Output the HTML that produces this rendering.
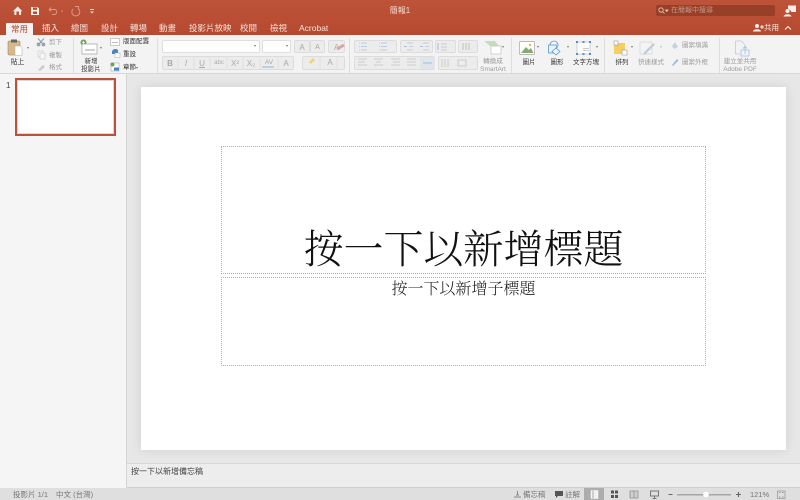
<!DOCTYPE html>
<html><head><meta charset="utf-8">
<style>
*{box-sizing:border-box}
html,body{margin:0;padding:0;width:800px;height:500px;overflow:hidden;background:#e9e9e9}
body{font-family:"Liberation Sans","Noto Sans CJK TC",sans-serif;position:relative}
.a{position:absolute;white-space:nowrap}
.tab{position:absolute;top:22px;height:12px;line-height:12px;font-size:8.5px;color:#f6e2dc}
.l{position:absolute;white-space:nowrap;font-size:6.5px;line-height:9px;color:#333;text-align:center}
.g{color:#9b9b9b}
.b{position:absolute;background:#ececec;border:1px solid #dcdcdc;border-radius:2px}
.sep{position:absolute;top:38px;width:1px;height:35px;background:#dedede}
svg{position:absolute;overflow:visible}
.c{position:absolute;font-size:8px;line-height:13px;color:#a8a8a8;text-align:center}
.ar{position:absolute;width:0;height:0;border-left:1.5px solid transparent;border-right:1.5px solid transparent;border-top:2px solid #777}
</style></head><body>
<!-- title bar -->
<div class="a" style="left:0;top:0;width:800px;height:35px;background:linear-gradient(#bd5339,#b64a30)"></div>
<svg style="left:0;top:0" width="800" height="35">
<path d="M13 11.2L17.7 6.5 22.4 11.2H21V15H19V11.5H16.4V15H14.4V11.2Z" fill="#fbeee9"/>
<path d="M31 7H37.5L39 8.5V15H31Z" fill="#fbeee9"/><rect x="33" y="7.5" width="4" height="2.4" fill="#b94f35"/><rect x="33" y="11.5" width="4" height="2.5" fill="#b94f35"/>
<path d="M49 9.5H54.5C57.5 9.500 57.500 14.500 54 14.500H52M49 9.500L51 7.500M49 9.500L51 11.500" fill="none" stroke="#d99887" stroke-width="1"/>
<circle cx="62" cy="11" r=".8" fill="#d99887"/>
<path d="M78 8.500A4 4 0 1 1 73 9M75 6.500H78.500V10" fill="none" stroke="#d99887" stroke-width="1"/>
<rect x="90" y="9" width="4" height="1" fill="#f4dcd5"/><path d="M90 11.500H94L92 13.500Z" fill="#f4dcd5"/>
<path d="M788 5.500H796V12H791.500L790.500 10.500 788 8.500Z" fill="#fbeee9"/><circle cx="787.500" cy="11" r="2" fill="#fbeee9"/><path d="M783.500 16.500C784 13.500 791 13.500 791.500 16.500Z" fill="#fbeee9"/>
</svg>
<div class="a" style="left:385px;top:5px;width:30px;text-align:center;font-size:8px;line-height:12px;color:#f5ded7">簡報1</div>
<div class="a" style="left:656px;top:5px;width:119px;height:11px;background:#974029;border-radius:2px"></div>
<svg style="left:0;top:0" width="800" height="20"><circle cx="661" cy="10" r="2.200" fill="none" stroke="#eec9bd" stroke-width=".8"/><path d="M662.500 11.500L664.500 13.500M665.500 10H668L666.700 11.500Z" stroke="#eec9bd" stroke-width=".8" fill="#eec9bd"/></svg>
<div class="a" style="left:671px;top:5px;font-size:7px;line-height:12px;color:#c99484">在簡報中搜尋</div>
<!-- tabs -->
<div class="a" style="left:6px;top:23px;width:27px;height:12px;background:#f3f3f3;border-radius:1px 1px 0 0;color:#b5482e;font-size:8.500px;line-height:12px;text-align:center">常用</div>
<div class="tab" style="left:42px">插入</div>
<div class="tab" style="left:71px">繪圖</div>
<div class="tab" style="left:101px">設計</div>
<div class="tab" style="left:130px">轉場</div>
<div class="tab" style="left:159px">動畫</div>
<div class="tab" style="left:189px">投影片放映</div>
<div class="tab" style="left:240px">校閱</div>
<div class="tab" style="left:270px">檢視</div>
<div class="tab" style="left:299px">Acrobat</div>
<svg style="left:0;top:0" width="800" height="35"><circle cx="757" cy="26" r="2" fill="#fbeee9"/><path d="M753 31.500C753 28.500 761 28.500 761 31.500Z" fill="#fbeee9"/><path d="M760 27H764M762 25V29" stroke="#fbeee9"/><path d="M785 29.500L788 26.500 791 29.500" fill="none" stroke="#fbeee9"/></svg>
<div class="tab" style="left:764px;color:#fbeee9;font-size:7.500px">共用</div>
<!-- ribbon -->
<div class="a" style="left:0;top:35px;width:800px;height:39px;background:#f3f3f3;border-bottom:1px solid #d8d8d8"></div>
<div class="sep" style="left:73px"></div><div class="sep" style="left:157px"></div><div class="sep" style="left:349px"></div><div class="sep" style="left:511px"></div><div class="sep" style="left:604px"></div><div class="sep" style="left:719px"></div>
<!-- paste -->
<svg style="left:0;top:0" width="160" height="75">
<rect x="8" y="41" width="12" height="14" rx="1" fill="#d9b98b" stroke="#8a7a62" stroke-width=".5"/><rect x="11" y="39.500" width="6" height="3" fill="#666"/><path d="M15 46H20.500L22 47.500V55.500H15Z" fill="#fff" stroke="#aaa" stroke-width=".5"/>
<path d="M38 38.500L44 45M44 38.500L38 45" stroke="#8f9aa3" stroke-width="1"/><circle cx="38.500" cy="44.500" r="1.400" fill="none" stroke="#8f9aa3"/><circle cx="43.500" cy="44.500" r="1.400" fill="none" stroke="#8f9aa3"/>
<rect x="38" y="51" width="5" height="6" fill="#f7f7f7" stroke="#c6c6c6" stroke-width=".6"/><rect x="40" y="53" width="5" height="6" fill="#f7f7f7" stroke="#c6c6c6" stroke-width=".6"/>
<path d="M38 70L43 65 45 67 40 71Z" fill="#c6cbd0"/>
<circle cx="83.500" cy="42.500" r="3" fill="#63a850"/><path d="M82 42.500H85M83.500 41V44" stroke="#fff" stroke-width=".8"/>
<rect x="82" y="44" width="15" height="10" fill="#fff" stroke="#a2a2a2" stroke-width=".7"/><rect x="85" y="49" width="10" height="2" fill="#d0d0d0"/>
<rect x="110.500" y="38.500" width="9" height="7" fill="#fff" stroke="#aaa" stroke-width=".6"/><rect x="112" y="42" width="6" height="1" fill="#bbb"/>
<path d="M112 52C112 49 116 48 118 50V54H112Z" fill="#4a83c4"/><rect x="115" y="53" width="5" height="4.500" fill="#fff" stroke="#aaa" stroke-width=".5"/>
<rect x="111" y="63" width="8" height="8" fill="#fff" stroke="#aaa" stroke-width=".6"/><circle cx="112.500" cy="64.500" r="2" fill="#63a850"/><rect x="114" y="67.500" width="5" height="3" fill="#4a83c4"/>
</svg>
<div class="ar" style="left:27px;top:47px"></div><div class="ar" style="left:100px;top:47px"></div>
<div class="l" style="left:6px;top:58px;width:23px;font-size:6.800px">貼上</div>
<div class="l g" style="left:49px;top:38px">剪下</div>
<div class="l g" style="left:49px;top:51px">複製</div>
<div class="l g" style="left:49px;top:63px">格式</div>
<div class="l" style="left:78px;top:58px;width:26px;line-height:8px;">新增<br>投影片</div>
<div class="l" style="left:123px;top:37px;">版面配置</div><div class="ar" style="left:147px;top:41px"></div>
<div class="l" style="left:123px;top:50px;">重設</div>
<div class="l" style="left:123px;top:63px;">章節</div><div class="ar" style="left:136px;top:67px"></div>
<!-- font -->
<div class="a" style="left:162px;top:40px;width:98px;height:13px;background:#fff;border:1px solid #dedede;border-radius:2px"></div><div class="ar" style="left:254px;top:45px"></div>
<div class="a" style="left:262px;top:40px;width:29px;height:13px;background:#fff;border:1px solid #dedede;border-radius:2px"></div><div class="ar" style="left:286px;top:45px"></div>
<div class="b c" style="left:294px;top:40px;width:16px;height:13px;">A</div><div class="b c" style="left:310px;top:40px;width:15px;height:13px;font-size:7px">A</div><div class="b c" style="left:328px;top:40px;width:17px;height:13px;color:#c9a0a0">A</div>
<div class="b" style="left:162px;top:56px;width:132px;height:14px"></div>
<div class="c" style="left:164px;top:57px;width:12px;font-weight:bold">B</div>
<div class="c" style="left:180px;top:57px;width:12px;font-style:italic">I</div>
<div class="c" style="left:196px;top:57px;width:12px;text-decoration:underline">U</div>
<div class="c" style="left:212px;top:57px;width:14px;font-size:6px">abc</div>
<div class="c" style="left:228px;top:57px;width:14px;">X²</div>
<div class="c" style="left:244px;top:57px;width:14px;">X₂</div>
<div class="c" style="left:262px;top:56px;width:14px;font-size:6.500px">AV</div>
<div class="c" style="left:280px;top:57px;width:12px;">A</div>
<div class="b" style="left:302px;top:56px;width:43px;height:14px"></div>
<div class="c" style="left:323px;top:56px;width:14px;">A</div>
<svg style="left:0;top:0" width="520" height="75">
<path d="M309 62L313 58 315 60 311 64Z" fill="#efd27a"/><path d="M320 56V70M337 56V70M178 56V70M194 56V70M210 56V70M227 56V70M243 56V70M260 56V70M278 56V70" stroke="#e0e0e0"/>
<path d="M262 67H274" stroke="#8db5de"/>
<path d="M337 49L344 45" stroke="#d9a6a6" stroke-width="3"/>
</svg>
<!-- paragraph -->
<div class="b" style="left:354px;top:40px;width:43px;height:13px"></div>
<div class="b" style="left:400px;top:40px;width:33px;height:13px"></div>
<div class="b" style="left:435px;top:40px;width:21px;height:13px"></div>
<div class="b" style="left:458px;top:40px;width:20px;height:13px"></div>
<div class="b" style="left:354px;top:56px;width:81px;height:14px"></div>
<div class="b" style="left:438px;top:56px;width:40px;height:14px"></div>
<svg style="left:0;top:0" width="520" height="75" fill="none" stroke="#c2c2c2" stroke-width=".8">
<path d="M361 43H367M361 46.500H367M361 50H367M381 43H387M381 46.500H387M381 50H387M360 43H359M360 46.500H359M360 50H359M380 43H379M380 46.500H379M380 50H379" stroke="#a9c4df"/>
<path d="M407 43H413M409 46.500H413M407 50H413M423 43H429M425 46.500H429M423 50H429M441 44H447M441 47H447M441 50H447"/>
<path d="M404 46.500H407M420 46.500H423M438 43V50" stroke="#8db5de"/>
<path d="M463 43V50M466 43V50M469 43V50" stroke="#c7d4b9" stroke-width="1.500"/>
<path d="M358 59H367M358 62H365M358 65H367M374 59H383M376 62H381M374 65H383M391 59H400M393 62H400M391 65H400M407 59H416M407 62H416M407 65H416"/>
<rect x="420" y="57" width="15" height="12" fill="#dfe5ea" stroke="none"/><path d="M423 63H432" stroke="#8db5de"/>
<path d="M442 59V67M445 59V67M448 59V67M458 60H466V66H458Z"/>
<path d="M484 41H495L499 46H490Z" fill="#c9dcb8" stroke="none"/><rect x="491" y="46" width="10" height="8" fill="#fff" stroke="#c6c6c6"/>
</svg>
<div class="ar" style="left:502px;top:46px"></div>
<div class="l g" style="left:480px;top:58px;width:26px;line-height:8px">轉換成<br>SmartArt</div>
<!-- insert -->
<svg style="left:0;top:0" width="800" height="75">
<rect x="519.500" y="41.500" width="15" height="13" rx="1" fill="#fff" stroke="#a5a5a5" stroke-width=".7"/><path d="M521 53L526 47 529 50 531 48 533.500 53Z" fill="#85aa72"/><circle cx="530" cy="45" r="1.200" fill="#e5b842"/>
<circle cx="554" cy="45" r="4" fill="#f0f6fc" stroke="#5b97d1" stroke-width=".8"/><rect x="548.500" y="45" width="8" height="8" fill="#eaf2fa" stroke="#5b97d1" stroke-width=".8"/><path d="M556 48L560 51.500 556 55 552 51.500Z" fill="#eaf2fa" stroke="#5b97d1" stroke-width=".8"/>
<rect x="577" y="42" width="13" height="12" fill="#fff" stroke="#aaa" stroke-width=".5"/><path d="M583 48.500H589M583 50.500H589" stroke="#bbb" stroke-width=".7"/>
<g fill="#4a90d9"><rect x="576" y="41" width="2" height="2"/><rect x="582.500" y="41" width="2" height="2"/><rect x="589" y="41" width="2" height="2"/><rect x="576" y="53" width="2" height="2"/><rect x="582.500" y="53" width="2" height="2"/><rect x="589" y="53" width="2" height="2"/></g>
<rect x="614" y="43" width="11" height="11" fill="#f6cf5e"/><rect x="614" y="41" width="4" height="4" fill="#fff" stroke="#888" stroke-width=".5"/><rect x="622" y="50" width="5" height="5" fill="#fff" stroke="#888" stroke-width=".5"/>
<rect x="640" y="42" width="12" height="12" rx="1" fill="#f4f4f4" stroke="#d4d4d4" stroke-width=".7"/><path d="M644 54L651 47 654 44" stroke="#c5ced6" stroke-width="2.500"/>
<path d="M672 46L675 42 678 47 674 49Z" fill="#c8d2da"/>
<path d="M672 65L677 59 678.500 60.500 673 66Z" fill="#9bb9d8"/>
<path d="M735.500 41H741.500L745 45V50M735.500 41V54H740" fill="none" stroke="#b9cde0" stroke-width=".8"/><path d="M741 50H749V56H741ZM745 54V46.500M743 48.500L745 46.500 747 48.500" fill="none" stroke="#9fbfdc" stroke-width=".8"/>
</svg>
<div class="ar" style="left:537px;top:46px"></div><div class="ar" style="left:567px;top:46px"></div><div class="ar" style="left:596px;top:46px"></div><div class="ar" style="left:631px;top:46px"></div><div class="ar" style="left:660px;top:46px;border-top-color:#bbb"></div>
<div class="l" style="left:518px;top:58px;width:22px">圖片</div>
<div class="l" style="left:546px;top:58px;width:22px">圖形</div>
<div class="l" style="left:572px;top:58px;width:28px">文字方塊</div>
<div class="l" style="left:612px;top:58px;width:20px">排列</div>
<div class="l g" style="left:637px;top:58px;width:28px">快速樣式</div>
<div class="l g" style="left:682px;top:41px">圖案填滿</div>
<div class="l g" style="left:682px;top:58px">圖案外框</div>
<div class="l g" style="left:722px;top:58px;width:36px;line-height:7.500px">建立並共用<br>Adobe PDF</div>
<!-- left pane -->
<div class="a" style="left:0;top:74px;width:127px;height:414px;background:#f5f5f5;border-right:1px solid #d5d5d5"></div>
<div class="a" style="left:6px;top:81px;font-size:8px;line-height:10px;color:#444">1</div>
<div class="a" style="left:15px;top:78px;width:101px;height:58px;background:#fff;border:2px solid #bb5138;box-shadow:inset 0 0 0 1px #d8d8d8"></div>
<!-- canvas -->
<div class="a" style="left:127px;top:74px;width:673px;height:389px;background:#e7e7e7"></div>
<div class="a" style="left:141px;top:87px;width:645px;height:363px;background:#fff;box-shadow:0 0 10px rgba(0,0,0,.1)"></div>
<div class="a" style="left:221px;top:146px;width:485px;height:128px;border:1px dotted #b0b0b0"></div>
<div class="a" style="left:221px;top:277px;width:485px;height:89px;border:1px dotted #b0b0b0"></div>
<div class="a" style="left:221px;top:221px;width:485px;text-align:center;font-family:'Liberation Serif','Noto Serif CJK TC','Noto Serif CJK SC',serif;font-size:40px;line-height:58px;color:#111;font-weight:300">按一下以新增標題</div>
<div class="a" style="left:221px;top:278px;width:485px;text-align:center;font-family:'Liberation Serif','Noto Serif CJK TC','Noto Serif CJK SC',serif;font-size:16px;line-height:24px;color:#222;font-weight:300">按一下以新增子標題</div>
<!-- notes -->
<div class="a" style="left:127px;top:463px;width:673px;height:25px;background:#ededed;border-top:1px solid #d8d8d8;border-bottom:1px solid #cfcfcf"></div>
<div class="a" style="left:131px;top:466px;font-size:8px;line-height:12px;color:#444">按一下以新增備忘稿</div>
<!-- status -->
<div class="a" style="left:0;top:488px;width:800px;height:12px;background:#dfdfdf"></div>
<div class="a" style="left:13px;top:489px;font-size:7.500px;line-height:11px;color:#777">投影片 1/1</div>
<div class="a" style="left:56px;top:489px;font-size:7.500px;line-height:11px;color:#777">中文 (台灣)</div>
<div class="a" style="left:523px;top:489px;font-size:7.500px;line-height:11px;color:#777">備忘稿</div>
<div class="a" style="left:565px;top:489px;font-size:7.500px;line-height:11px;color:#777">註解</div>
<div class="a" style="left:584px;top:488px;width:20px;height:12px;background:#adadad"></div>
<div class="a" style="left:750px;top:489px;font-size:7.500px;line-height:11px;color:#777">121%</div>
<svg style="left:0;top:0" width="800" height="500">
<path d="M514 497H521M516 495H519M517.500 491V495" stroke="#888" fill="none"/>
<path d="M555 491H563V496H558L556 498V496H555Z" fill="#555"/>
<rect x="591" y="490.500" width="7" height="8" fill="#f2f2f2" stroke="#fff" stroke-width=".5"/><path d="M593 490.500V498.500" stroke="#aaa"/>
<g fill="#555"><rect x="611" y="490.500" width="3" height="3"/><rect x="615" y="490.500" width="3" height="3"/><rect x="611" y="495" width="3" height="3"/><rect x="615" y="495" width="3" height="3"/></g>
<rect x="630" y="491" width="8" height="7" fill="#cfcfcf" stroke="#888" stroke-width=".7"/><path d="M634 491V498" stroke="#888" stroke-width=".7"/>
<path d="M650.500 491H658.500V496H650.500ZM654.500 496V498.500M652.500 498.500H656.500" fill="none" stroke="#777"/>
<path d="M668.500 494.500H672.500M736 494.500H741M738.500 492V497" stroke="#666" stroke-width="1.100"/>
<rect x="677" y="494" width="54" height="1.500" fill="#a6a6a6"/><circle cx="706" cy="494.500" r="2.800" fill="#fff"/>
<path d="M777.500 491H785V498.500H777.500Z" fill="none" stroke="#999" stroke-width=".8"/><path d="M779 492.500H780.500M782 492.500H783.500M779 497H780.500M782 497H783.500" stroke="#999"/>
</svg>
</body></html>
